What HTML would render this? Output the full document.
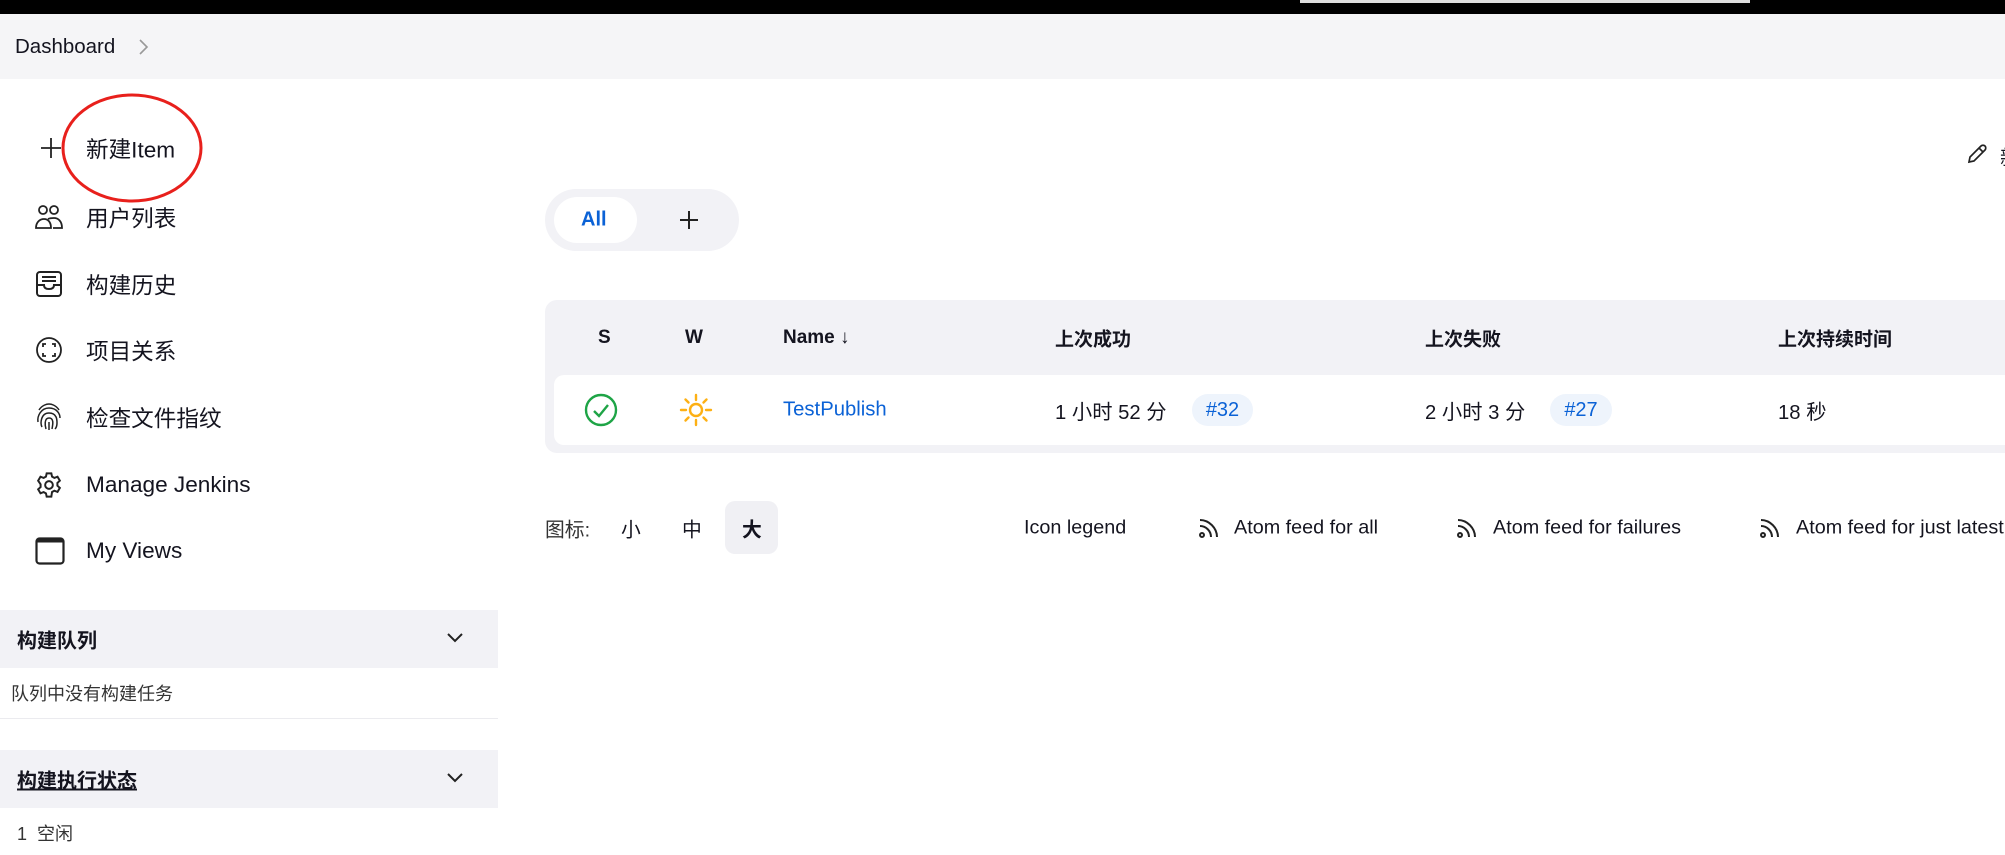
<!DOCTYPE html>
<html><head><meta charset="utf-8"><style>
*{margin:0;padding:0;box-sizing:border-box}
body{width:2005px;height:855px;overflow:hidden;background:#fff;font-family:"Liberation Sans","Noto Sans CJK SC",sans-serif;color:#14141f;position:relative}
.a{position:absolute;white-space:nowrap}
.mid{transform:translateY(-50%)}
svg{position:absolute}
.it{font-size:22.6px}
.th{font-size:19px;font-weight:bold}
.td{font-size:20.3px}
.badge{position:absolute;background:#eef4fc;color:#0b62d6;border-radius:16px;font-size:20px;text-align:center}
.ft{font-size:19.8px}
</style></head><body>
<div class="a" style="left:0;top:0;width:2005px;height:14px;background:#000"></div>
<div class="a" style="left:1300px;top:0;width:450px;height:3px;background:#ddd"></div>
<div class="a" style="left:0;top:14px;width:2005px;height:65px;background:#f5f5f7"></div>
<div class="a mid" style="left:15px;top:47px;font-size:20.5px">Dashboard</div>
<svg style="left:138px;top:38px" width="12" height="18" viewBox="0 0 12 18"><path d="M2 2l7 7-7 7" fill="none" stroke="#999" stroke-width="1.6"/></svg>

<svg style="left:40px;top:137px" width="22" height="22" viewBox="0 0 22 22"><path d="M11 1v20M1 11h20" stroke="#222" stroke-width="1.8"/></svg>
<div class="a mid it" style="left:86px;top:148px">新建Item</div>
<svg style="left:35px;top:85px" width="175" height="125" viewBox="0 0 175 125"><ellipse cx="97" cy="63" rx="69" ry="53" fill="none" stroke="#e8201c" stroke-width="3"/></svg>

<svg style="left:34px;top:204px" width="30" height="26" viewBox="0 0 30 26"><g fill="none" stroke="#222" stroke-width="1.8"><circle cx="9" cy="6" r="4"/><circle cx="20" cy="6" r="4"/><path d="M2 24c0-6 4-9 8-9s7 3 7 9zM14 15c2-1 4-1 6-1 4 0 8 3 8 10H19"/></g></svg>
<div class="a mid it" style="left:86px;top:217px">用户列表</div>

<svg style="left:35px;top:270px" width="28" height="28" viewBox="0 0 28 28"><g fill="none" stroke="#222" stroke-width="2"><rect x="2" y="2" width="24" height="24" rx="3"/><path d="M2 15h7c0 3 2 4 5 4s5-1 5-4h7M7 7h14M7 11h14"/></g></svg>
<div class="a mid it" style="left:86px;top:284px">构建历史</div>

<svg style="left:35px;top:336px" width="28" height="28" viewBox="0 0 28 28"><g fill="none" stroke="#222" stroke-width="1.8"><circle cx="14" cy="14" r="12"/><path d="M8 11V8h3M17 8h3v3M20 17v3h-3M11 20H8v-3"/></g></svg>
<div class="a mid it" style="left:86px;top:350px">项目关系</div>

<svg style="left:35px;top:402px" width="28" height="30" viewBox="0 0 28 30"><g fill="none" stroke="#222" stroke-width="1.5"><path d="M4 8c3-5 8-6 10-6s7 1 10 6"/><path d="M3 20c-1-6 3-14 11-14s11 6 11 10"/><path d="M7 25c-2-4-1-14 7-14s8 7 8 10-1 5-2 6"/><path d="M11 27c-1-3-2-11 3-11s4 6 3 11"/><path d="M14 20v8"/></g></svg>
<div class="a mid it" style="left:86px;top:417px">检查文件指纹</div>

<svg style="left:35px;top:471px" width="28" height="28" viewBox="0 0 24 24"><g fill="none" stroke="#222" stroke-width="1.7"><path d="M10 2h4l.6 2.8 2 1.1 2.7-1 2 3.4-2.1 1.9v2.4l2.1 1.9-2 3.4-2.7-1-2 1.1L14 22h-4l-.6-2.8-2-1.1-2.7 1-2-3.4 2.1-1.9v-2.4L2.7 8.3l2-3.4 2.7 1 2-1.1z"/><circle cx="12" cy="12" r="3.3"/></g></svg>
<div class="a mid it" style="left:86px;top:485px">Manage Jenkins</div>

<svg style="left:35px;top:537px" width="30" height="28" viewBox="0 0 30 28"><rect x="1.5" y="1.5" width="27" height="25" rx="3" fill="none" stroke="#222" stroke-width="2.2"/><rect x="1.5" y="1.5" width="27" height="4" fill="#222"/></svg>
<div class="a mid it" style="left:86px;top:551px">My Views</div>

<div class="a" style="left:0;top:610px;width:498px;height:58px;background:#f2f2f6"></div>
<div class="a mid" style="left:17px;top:639px;font-size:20px;font-weight:bold">构建队列</div>
<svg style="left:446px;top:632px" width="18" height="12" viewBox="0 0 18 12"><path d="M2 2l7 7 7-7" fill="none" stroke="#222" stroke-width="2"/></svg>
<div class="a mid" style="left:11px;top:693px;font-size:18px;color:#333">队列中没有构建任务</div>
<div class="a" style="left:0;top:718px;width:498px;height:1px;background:#ebebef"></div>
<div class="a" style="left:0;top:750px;width:498px;height:58px;background:#f2f2f6"></div>
<div class="a mid" style="left:17px;top:779px;font-size:20px;font-weight:bold;text-decoration:underline">构建执行状态</div>
<svg style="left:446px;top:772px" width="18" height="12" viewBox="0 0 18 12"><path d="M2 2l7 7 7-7" fill="none" stroke="#222" stroke-width="2"/></svg>
<div class="a mid" style="left:17px;top:833px;font-size:18px;color:#333">1&nbsp; 空闲</div>

<svg style="left:1965px;top:142px" width="24" height="24" viewBox="0 0 24 24"><path d="M4 20l1-5L16 4c1-1 3-1 4 0s1 3 0 4L9 19z M14 6l4 4" fill="none" stroke="#222" stroke-width="1.7"/></svg>
<div class="a mid" style="left:2000px;top:156px;font-size:20px">新</div>

<div class="a" style="left:545px;top:189px;width:194px;height:62px;background:#f2f2f6;border-radius:31px"></div>
<div class="a" style="left:554px;top:197px;width:83px;height:46px;background:#fff;border-radius:23px"></div>
<div class="a mid" style="left:581px;top:220px;font-size:20px;font-weight:bold;color:#0b62d6">All</div>
<svg style="left:679px;top:210px" width="20" height="20" viewBox="0 0 20 20"><path d="M10 1v18M1 10h18" stroke="#222" stroke-width="2"/></svg>

<div class="a" style="left:545px;top:300px;width:1480px;height:153px;background:#f2f2f6;border-radius:12px"></div>
<div class="a" style="left:554px;top:375px;width:1470px;height:70px;background:#fff;border-radius:10px"></div>
<div class="a mid th" style="left:598px;top:338px">S</div>
<div class="a mid th" style="left:685px;top:338px">W</div>
<div class="a mid th" style="left:783px;top:338px">Name ↓</div>
<div class="a mid th" style="left:1055px;top:338px">上次成功</div>
<div class="a mid th" style="left:1425px;top:338px">上次失败</div>
<div class="a mid th" style="left:1778px;top:338px">上次持续时间</div>

<svg style="left:584px;top:393px" width="34" height="34" viewBox="0 0 34 34"><circle cx="17" cy="17" r="15" fill="none" stroke="#1ea446" stroke-width="2.4"/><path d="M10 18l5 5 9-11" fill="none" stroke="#1ea446" stroke-width="2.4"/></svg>
<svg style="left:679px;top:393px" width="34" height="34" viewBox="0 0 34 34"><g stroke="#fdb014" stroke-width="2.4" fill="none" stroke-linecap="round"><circle cx="17" cy="17" r="6"/><path d="M17 2v5M17 27v5M2 17h5M27 17h5M6.5 6.5l3 3M24.5 24.5l3 3M27.5 6.5l-3 3M9.5 24.5l-3 3"/></g></svg>
<div class="a mid td" style="left:783px;top:410px;color:#0b62d6">TestPublish</div>
<div class="a mid td" style="left:1055px;top:410px">1 小时 52 分</div>
<div class="badge" style="left:1192px;top:394px;width:61px;height:32px;line-height:32px">#32</div>
<div class="a mid td" style="left:1425px;top:410px">2 小时 3 分</div>
<div class="badge" style="left:1550px;top:394px;width:62px;height:32px;line-height:32px">#27</div>
<div class="a mid td" style="left:1778px;top:410px">18 秒</div>

<div class="a mid ft" style="left:545px;top:528px;color:#333">图标:</div>
<div class="a mid ft" style="left:621px;top:528px">小</div>
<div class="a mid ft" style="left:682px;top:528px">中</div>
<div class="a" style="left:725px;top:501px;width:53px;height:53px;background:#f0f0f4;border-radius:10px"></div>
<div class="a mid ft" style="left:742px;top:528px;font-weight:bold">大</div>
<div class="a mid ft" style="left:1024px;top:528px">Icon legend</div>
<svg style="left:1197px;top:516px" width="24" height="24" viewBox="0 0 24 24"><g fill="none" stroke="#222" stroke-width="2"><path d="M3 4c9 0 17 8 17 17M3 10c6 0 11 5 11 11"/><circle cx="5" cy="19" r="2"/></g></svg>
<div class="a mid ft" style="left:1234px;top:528px">Atom feed for all</div>
<svg style="left:1455px;top:516px" width="24" height="24" viewBox="0 0 24 24"><g fill="none" stroke="#222" stroke-width="2"><path d="M3 4c9 0 17 8 17 17M3 10c6 0 11 5 11 11"/><circle cx="5" cy="19" r="2"/></g></svg>
<div class="a mid ft" style="left:1493px;top:528px">Atom feed for failures</div>
<svg style="left:1758px;top:516px" width="24" height="24" viewBox="0 0 24 24"><g fill="none" stroke="#222" stroke-width="2"><path d="M3 4c9 0 17 8 17 17M3 10c6 0 11 5 11 11"/><circle cx="5" cy="19" r="2"/></g></svg>
<div class="a mid ft" style="left:1796px;top:528px">Atom feed for just latest builds</div>
</body></html>
